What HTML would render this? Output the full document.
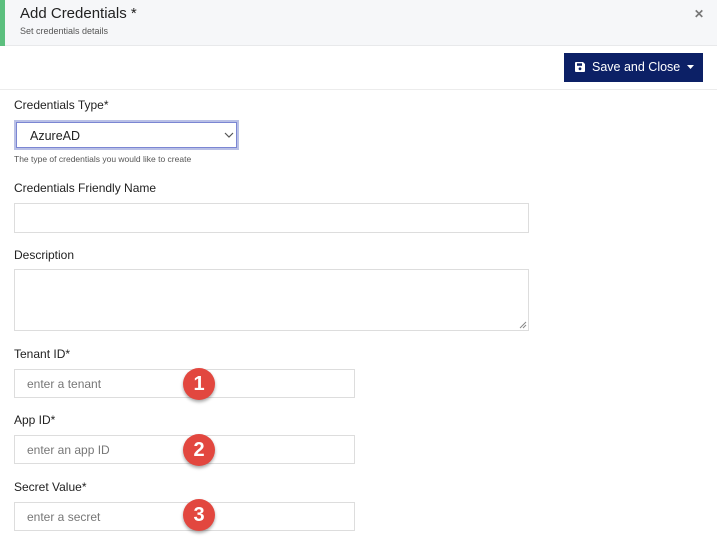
<!DOCTYPE html>
<html><head><style>
*{box-sizing:border-box;margin:0;padding:0}
body{width:717px;height:543px;overflow:hidden;background:#fff;font-family:"Liberation Sans",sans-serif;color:#222;position:relative}
.hdr{position:absolute;left:0;top:0;width:717px;height:46px;background:#f6f7f9;border-bottom:1px solid #e8e9eb}
.bar{position:absolute;left:0;top:0;width:5px;height:46px;background:#5cbf7e}
.t{position:absolute;left:20px;top:5px;font-size:15px;color:#222}
.st{position:absolute;left:20px;top:26px;font-size:9px;color:#555}
.x{position:absolute;left:694px;top:7px;font-size:12px;color:#777;font-weight:bold}
.tb{position:absolute;left:0;top:46px;width:717px;height:44px;border-bottom:1px solid #ececec}
.btn{position:absolute;left:564px;top:53px;width:139px;height:29px;background:#0c2066;color:#fff;font-size:12.5px}
.btn .l{position:absolute;left:28px;top:7px}
.lab{position:absolute;left:14px;font-size:12px;color:#222}
.inp{position:absolute;left:14px;border:1px solid #ddd;background:#fff;font-size:12px;color:#777}
.inp span{position:absolute;left:12px}
.b{position:absolute;width:32px;height:32px;border-radius:50%;background:#e2473f;color:#fff;font-weight:bold;font-size:20px;text-align:center;line-height:32px;box-shadow:0 2px 3px rgba(0,0,0,.35);left:183px}
</style></head><body>
<div class="hdr"><div class="bar"></div><div class="t">Add Credentials *</div><div class="st">Set credentials details</div><div class="x">✕</div></div>
<div class="tb"></div>
<div class="btn">
<svg style="position:absolute;left:11px;top:9px" width="10" height="10" viewBox="0 0 10 10"><path d="M0 1a1 1 0 0 1 1-1h7l2 2v7a1 1 0 0 1-1 1H1a1 1 0 0 1-1-1z" fill="#fff"/><rect x="2" y="1.3" width="5" height="2.5" fill="#0c2066"/><circle cx="5" cy="6.8" r="1.4" fill="#0c2066"/></svg>
<span class="l">Save and Close</span>
<svg style="position:absolute;left:123px;top:12px" width="7" height="5"><path d="M0 0h7L3.5 4z" fill="#fff"/></svg>
</div>
<div class="lab" style="top:98px">Credentials Type*</div>
<div class="inp" style="top:120px;width:225px;height:30px;border:2px solid #b9c0e6;outline:1px solid #7b86d3;outline-offset:-3px;color:#222;font-size:12.5px"><span style="top:7px;left:14px">AzureAD</span>
<svg style="position:absolute;left:208px;top:10px" width="10" height="6"><path d="M1 1l4 4 4-4" fill="none" stroke="#555" stroke-width="1.2"/></svg></div>
<div class="lab" style="top:154px;font-size:8.5px;color:#555">The type of credentials you would like to create</div>
<div class="lab" style="top:181px">Credentials Friendly Name</div>
<div class="inp" style="top:203px;width:515px;height:30px"></div>
<div class="lab" style="top:248px">Description</div>
<div class="inp" style="top:269px;width:515px;height:62px">
<svg style="position:absolute;right:1px;bottom:1px" width="8" height="8"><path d="M7 1L1 7M7 4L4 7" stroke="#888" stroke-width="1"/></svg></div>
<div class="lab" style="top:347px">Tenant ID*</div>
<div class="inp" style="top:369px;width:341px;height:29px"><span style="top:7px">enter a tenant</span></div>
<div class="b" style="top:368px">1</div>
<div class="lab" style="top:413px">App ID*</div>
<div class="inp" style="top:435px;width:341px;height:29px"><span style="top:7px">enter an app ID</span></div>
<div class="b" style="top:434px">2</div>
<div class="lab" style="top:480px">Secret Value*</div>
<div class="inp" style="top:502px;width:341px;height:29px"><span style="top:7px">enter a secret</span></div>
<div class="b" style="top:499px">3</div>
</body></html>
